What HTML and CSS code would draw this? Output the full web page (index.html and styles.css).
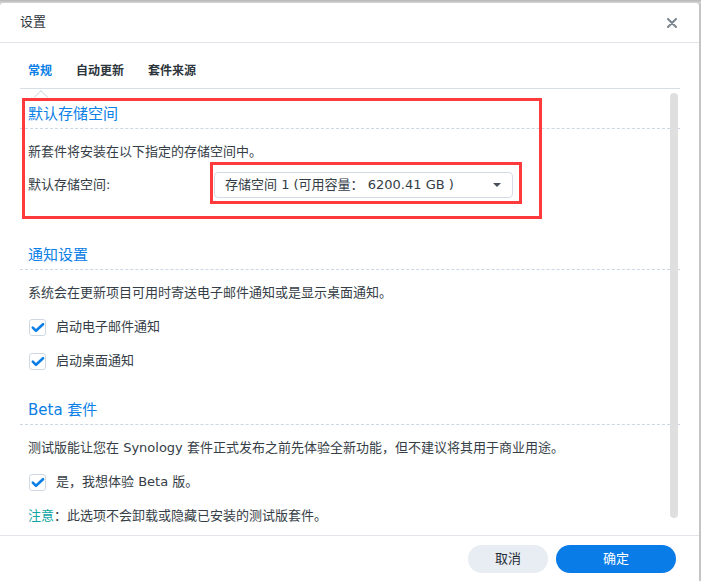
FILE: index.html
```html
<!DOCTYPE html>
<html lang="zh-CN">
<head>
<meta charset="utf-8">
<title>设置</title>
<link rel="stylesheet" href="styles.css">
</head>
<body>
<div class="dialog">
  <header class="hd">
    <span class="title">设置</span>
    <span class="close"><svg width="10" height="10" viewBox="0 0 10 10"><path d="M1 1L9 9M9 1L1 9" stroke="#7b858f" stroke-width="2" stroke-linecap="round"/></svg></span>
  </header>
  <nav class="tabs">
    <span class="tab active">常规</span>
    <span class="tab">自动更新</span>
    <span class="tab">套件来源</span>
  </nav>
  <main class="content">
    <section class="sec s1">
      <h2 class="sec-title">默认存储空间</h2>
      <p class="desc">新套件将安装在以下指定的存储空间中。</p>
      <div class="field">
        <span class="field-label">默认存储空间:</span>
        <div class="select">
          <span class="select-text">存储空间 1 (可用容量： 6200.41 GB )</span>
          <span class="caret"></span>
        </div>
      </div>
    </section>
    <section class="sec s2">
      <h2 class="sec-title">通知设置</h2>
      <p class="desc">系统会在更新项目可用时寄送电子邮件通知或是显示桌面通知。</p>
      <div class="check-row r1">
        <span class="cb"><svg width="17" height="17" viewBox="0 0 17 17"><path d="M3.8 8.6L7 11.8L14 5.2" fill="none" stroke="#0b7fe6" stroke-width="2.6" stroke-linecap="round" stroke-linejoin="round"/></svg></span>
        <span class="cb-label">启动电子邮件通知</span>
      </div>
      <div class="check-row r2">
        <span class="cb"><svg width="17" height="17" viewBox="0 0 17 17"><path d="M3.8 8.6L7 11.8L14 5.2" fill="none" stroke="#0b7fe6" stroke-width="2.6" stroke-linecap="round" stroke-linejoin="round"/></svg></span>
        <span class="cb-label">启动桌面通知</span>
      </div>
    </section>
    <section class="sec s3">
      <h2 class="sec-title">Beta 套件</h2>
      <p class="desc">测试版能让您在 Synology 套件正式发布之前先体验全新功能，但不建议将其用于商业用途。</p>
      <div class="check-row r3">
        <span class="cb"><svg width="17" height="17" viewBox="0 0 17 17"><path d="M3.8 8.6L7 11.8L14 5.2" fill="none" stroke="#0b7fe6" stroke-width="2.6" stroke-linecap="round" stroke-linejoin="round"/></svg></span>
        <span class="cb-label">是，我想体验 Beta 版。</span>
      </div>
      <p class="note"><span class="note-key">注意</span>：此选项不会卸载或隐藏已安装的测试版套件。</p>
    </section>
    <div class="scrollbar"></div>
  </main>
  <footer class="ft">
    <button class="btn">取消</button>
    <button class="btn primary">确定</button>
  </footer>
</div>
<div class="mark mark-a"></div>
<div class="mark mark-b"></div>
</body>
</html>
```
FILE: styles.css
```css
* { box-sizing: border-box; }
html, body { margin: 0; padding: 0; }
body {
  width: 701px;
  height: 581px;
  overflow: hidden;
  position: relative;
  background: linear-gradient(#b5b5b5, #d6d6d6 3px, #c4c4c4 4px);
  font-family: "DejaVu Sans", "Noto Sans CJK SC", sans-serif;
  color: #353d46;
}
.dialog {
  margin-top: 3px;
  width: 699px;
  height: 578px;
  background: #fff;
  border-radius: 3px 3px 0 0;
  display: flex;
  flex-direction: column;
}
.hd {
  height: 40px;
  border-bottom: 1px solid #e1e5ea;
  display: flex;
  align-items: center;
  justify-content: space-between;
  padding: 0 22px 0 20px;
  flex: none;
}
.title { font-size: 13px; line-height: 16px; color: #2f363e; margin-top: -1px; }
.close { display: flex; width: 10px; height: 10px; margin-top: 1px; }
.tabs {
  flex: none;
  margin: 0 19px 0 20px;
  height: 46px;
  padding: 20px 0 0 8px;
  border-bottom: 1px solid #d6dfe8;
  display: flex;
  gap: 24px;
  position: relative;
}
.tab {
  font-size: 12px;
  line-height: 16px;
  font-weight: bold;
  color: #2d353d;
  position: relative;
}
.tab.active { color: #0b7fe6; }
.tab.active::after {
  content: "";
  position: absolute;
  left: 50%;
  bottom: -14px;
  width: 9px;
  height: 9px;
  margin-left: -4.5px;
  background: #fff;
  border-left: 1px solid #d6dfe8;
  border-top: 1px solid #d6dfe8;
  transform: rotate(45deg);
}
.content {
  flex: none;
  height: 446px;
  position: relative;
  overflow: hidden;
  padding: 14px 19px 0 20px;
}
.sec-title {
  margin: 0;
  font-size: 15px;
  line-height: 20px;
  font-weight: normal;
  color: #0b80e6;
  padding: 1px 8px 4px;
  border-bottom: 1px dashed #cbd7e4;
}
.s2 { margin-top: 46px; }
.s3 { margin-top: 28px; }
.desc {
  margin: 13px 0 0;
  padding: 0 8px;
  font-size: 13px;
  line-height: 20px;
}
.field {
  margin-top: 10px;
  padding-left: 8px;
  height: 26px;
  display: flex;
  align-items: center;
  font-size: 13px;
}
.field-label { width: 186px; line-height: 20px; }
.select {
  width: 299px;
  height: 26px;
  border: 1px solid #d3dce6;
  border-radius: 4px;
  display: flex;
  align-items: center;
  justify-content: space-between;
  padding: 0 11px 0 10px;
}
.select-text { line-height: 20px; }
.caret {
  width: 0;
  height: 0;
  border-left: 4px solid transparent;
  border-right: 4px solid transparent;
  border-top: 4px solid #46505a;
}
.check-row {
  display: flex;
  align-items: center;
  height: 20px;
  padding-left: 9px;
  margin-top: 14px;
  font-size: 13px;
}
.cb {
  width: 17px;
  height: 17px;
  border: 1px solid #cfd8e2;
  border-radius: 3px;
  background: #fff;
  display: flex;
  flex: none;
  position: relative;
}
.cb svg { position: absolute; left: -1px; top: -1px; }
.cb-label { margin-left: 10px; line-height: 20px; }
.note {
  margin: 14px 0 0;
  padding: 0 8px;
  font-size: 13px;
  line-height: 20px;
}
.note-key { color: #0ea3a3; }
.scrollbar {
  position: absolute;
  left: 670px;
  top: 4px;
  width: 8px;
  height: 425px;
  border-radius: 4px;
  background: #dfdfdf;
}
.ft {
  flex: 1;
  border-top: 1px solid #e1e5ea;
  display: flex;
  justify-content: flex-end;
  gap: 8px;
  padding: 9px 23px 0 0;
}
.btn {
  height: 28px;
  border: none;
  border-radius: 14px;
  font-family: "DejaVu Sans", "Noto Sans CJK SC", sans-serif;
  font-size: 13px;
  line-height: 16px;
  padding: 0;
  width: 80px;
  background: #e8edf3;
  color: #242b33;
}
.btn.primary { width: 120px; background: #0a7ce8; color: #fff; }
.mark {
  position: absolute;
  border: 3px solid #fe3a3d;
}
.mark-a { left: 22px; top: 98px; width: 520px; height: 121px; }
.mark-b { left: 210px; top: 162px; width: 312px; height: 42px; }
```
